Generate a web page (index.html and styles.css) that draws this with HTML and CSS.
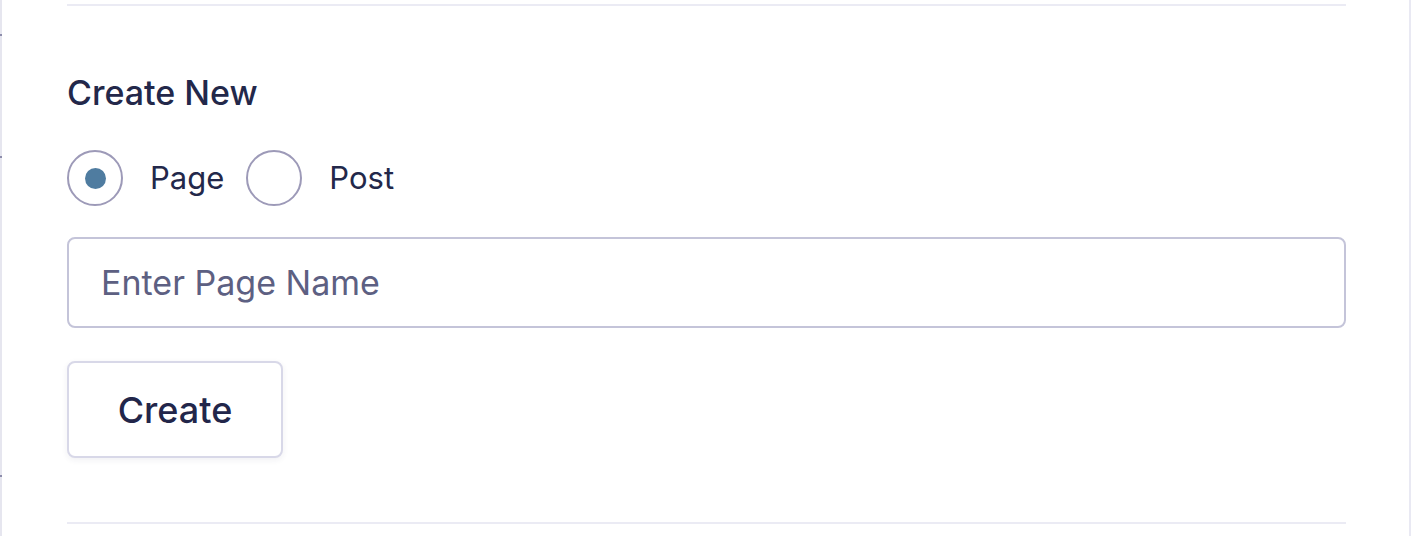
FILE: index.html
```html
<!DOCTYPE html>
<html>
<head>
<meta charset="utf-8">
<link rel="stylesheet" href="styles.css">
</head>
<body>
<div class="frame">
  <div class="rail-left">
    <div class="tick t1"></div>
    <div class="tick t2"></div>
    <div class="tick t3"></div>
  </div>
  <div class="main">
    <div class="rule rule-top"></div>
    <h2 class="title">Create New</h2>
    <div class="radios">
      <label class="radio">
        <span class="circle checked"><span class="dot"></span></span>
        <span class="radio-label">Page</span>
      </label>
      <label class="radio">
        <span class="circle"></span>
        <span class="radio-label">Post</span>
      </label>
    </div>
    <div class="field">
      <input class="name-input" type="text" placeholder="Enter Page Name">
    </div>
    <button class="create-btn" type="button">Create</button>
    <div class="rule rule-bottom"></div>
  </div>
  <div class="rail-right"></div>
</div>
</body>
</html>
```

FILE: styles.css
```css
* { box-sizing: border-box; }
html, body {
  margin: 0;
  padding: 0;
  background: #ffffff;
}
body {
  width: 1416px;
  height: 536px;
  overflow: hidden;
  font-family: Inter, "Noto Sans", sans-serif;
  color: #23284a;
}
.frame {
  display: flex;
  height: 536px;
}
.rail-left {
  width: 2px;
  flex: 0 0 2px;
  background: #e6e6ef;
  display: flex;
  flex-direction: column;
}
.tick {
  height: 2px;
  width: 2px;
  background: #8d8dab;
}
.t1 { margin-top: 34px; }
.t2 { margin-top: 120px; }
.t3 { margin-top: 317px; }
.main {
  margin-left: 65px;
  width: 1279px;
  flex: 0 0 1279px;
  display: flex;
  flex-direction: column;
}
.rule {
  height: 2px;
  background: #ebebf4;
}
.rule-top { margin-top: 4px; }
.title {
  margin: 67px 0 0 0;
  font-size: 34px;
  line-height: 40px;
  font-weight: 500;
  color: #23284a;
}
.radios {
  margin-top: 37px;
  display: flex;
  align-items: center;
  height: 56px;
}
.radio {
  display: flex;
  align-items: center;
  margin-right: 22px;
}
.circle {
  width: 56px;
  height: 56px;
  border: 2px solid #9d9ab8;
  border-radius: 50%;
  display: flex;
  align-items: center;
  justify-content: center;
  background: #fff;
}
.dot {
  width: 21px;
  height: 21px;
  border-radius: 50%;
  background: #4f7ca0;
}
.radio-label {
  margin-left: 27px;
  font-size: 31px;
  line-height: 40px;
  color: #23284a;
}
.field {
  margin-top: 31px;
}
.name-input {
  width: 1279px;
  height: 91px;
  border: 2px solid #c4c4d9;
  border-radius: 8px;
  padding: 0 0 0 32px;
  font-family: Inter, "Noto Sans", sans-serif;
  font-size: 34px;
  color: #23284a;
  background: #fff;
  outline: none;
}
.name-input::placeholder {
  color: #5d6082;
  opacity: 1;
}
.create-btn {
  margin-top: 33px;
  width: 216px;
  height: 97px;
  border: 2px solid #d8d8e8;
  border-radius: 8px;
  background: #fff;
  box-shadow: 0 2px 6px rgba(40, 40, 90, 0.07);
  font-family: Inter, "Noto Sans", sans-serif;
  font-size: 36px;
  font-weight: 500;
  color: #22264a;
  padding: 0;
  align-self: flex-start;
}
.rule-bottom { margin-top: 64px; }
.rail-right {
  margin-left: 63px;
  width: 2px;
  flex: 0 0 2px;
  background: #e9e9f3;
}
```
